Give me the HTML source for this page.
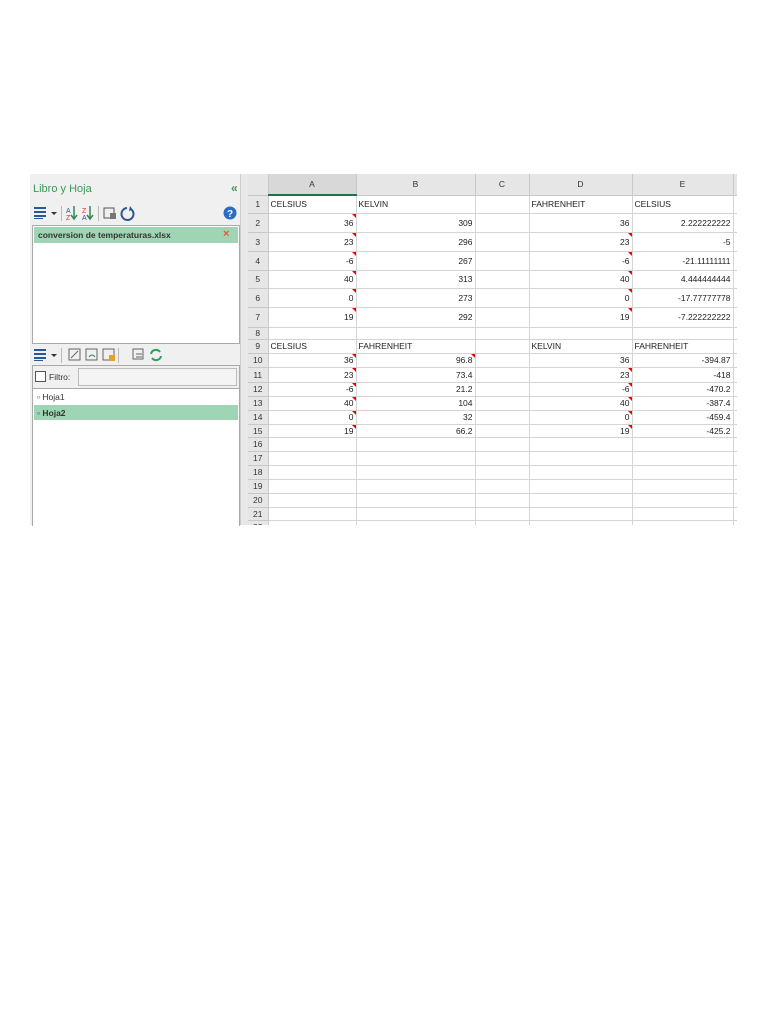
<!DOCTYPE html>
<html><head><meta charset="utf-8"><style>
body{margin:0;width:768px;height:1024px;background:#fff;position:relative;font-family:"Liberation Sans",sans-serif;overflow:hidden}
.a{position:absolute}
#panel{left:30px;top:174px;width:210px;height:351px;background:#f0f0f0}
table{border-collapse:collapse;table-layout:fixed;font-size:8.5px;color:#222;width:495px}
td{border-right:1px solid #d4d4d4;border-bottom:1px solid #d4d4d4;padding:0 2px;white-space:nowrap;overflow:hidden;position:relative}
td.h{background:#e6e6e6;text-align:center;color:#333;border-color:#c8c8c8}
td.r{text-align:right}
td.n{background:#e6e6e6;text-align:center;color:#333;border-color:#c8c8c8}
td.sel{border-bottom:2px solid #217346;background:#d8d8d8}
.t::after{content:"";position:absolute;right:0;top:0;border-top:4px solid #e00;border-left:4px solid transparent}
</style></head><body>
<div class="a" id="panel"></div>
<div class="a" style="left:33px;top:183px;font-size:11px;color:#3a9a5a">Libro y Hoja</div>
<div class="a" style="left:231px;top:181px;font-size:12px;color:#3a9a5a;font-weight:bold">«</div>
<svg class="a" style="left:32px;top:203px" width="210" height="20">
<g fill="#2b5797"><rect x="2" y="4" width="12" height="2"/><rect x="2" y="8" width="12" height="2"/><rect x="2" y="12" width="12" height="2"/><rect x="2" y="15" width="9" height="1"/></g>
<path d="M19 9 l3 3 l3-3z" fill="#333"/><rect x="29" y="3" width="1" height="15" fill="#bbb"/>
<text x="34" y="10" font-size="7" fill="#2b5797">A</text><text x="34" y="17" font-size="7" fill="#d33">Z</text><path d="M42 3v12M39 12l3 4 3-4" stroke="#2e8b57" fill="none" stroke-width="1.5"/>
<text x="50" y="10" font-size="7" fill="#d33">Z</text><text x="50" y="17" font-size="7" fill="#2b5797">A</text><path d="M58 3v12M55 12l3 4 3-4" stroke="#2e8b57" fill="none" stroke-width="1.5"/>
<rect x="66" y="3" width="1" height="15" fill="#bbb"/>
<rect x="72" y="5" width="10" height="10" fill="none" stroke="#555"/><rect x="78" y="10" width="6" height="6" fill="#777"/>
<path d="M95 5 a6 6 0 1 0 5 2" stroke="#2b5797" stroke-width="2" fill="none"/><path d="M98 3l3 4-4 1z" fill="#2b5797"/>
<circle cx="198" cy="10" r="6.5" fill="#2b6cc4"/><text x="195" y="14" font-size="10" font-weight="bold" fill="#fff">?</text>
</svg>
<div class="a" style="left:32px;top:225px;width:206px;height:117px;background:#fff;border:1px solid #aaa"></div>
<div class="a" style="left:34px;top:227px;width:204px;height:16px;background:#9fd5b5"></div>
<div class="a" style="left:38px;top:230px;font-size:8.5px;font-weight:bold;color:#333">conversion de temperaturas.xlsx</div>
<div class="a" style="left:223px;top:228px;font-size:11px;font-weight:bold;color:#e53">×</div>
<svg class="a" style="left:32px;top:345px" width="210" height="20">
<g fill="#2b5797"><rect x="2" y="4" width="12" height="2"/><rect x="2" y="8" width="12" height="2"/><rect x="2" y="12" width="12" height="2"/><rect x="2" y="15" width="9" height="1"/></g>
<path d="M19 9 l3 3 l3-3z" fill="#333"/><rect x="29" y="3" width="1" height="15" fill="#bbb"/>
<rect x="37" y="4" width="11" height="11" fill="none" stroke="#666"/><path d="M39 13l7-7" stroke="#666"/>
<rect x="54" y="4" width="11" height="11" fill="none" stroke="#666"/><path d="M57 12q3-4 6 0" stroke="#2e8b57" fill="none"/>
<rect x="71" y="4" width="11" height="11" fill="none" stroke="#666"/><rect x="77" y="10" width="6" height="6" fill="#e8a020"/>
<rect x="86" y="3" width="1" height="15" fill="#bbb"/>
<rect x="101" y="4" width="10" height="10" fill="none" stroke="#666"/><path d="M104 9h6M104 12h6" stroke="#666"/>
<path d="M119 9a5 5 0 0 1 9-2M129 11a5 5 0 0 1-9 2" stroke="#2ea05a" stroke-width="2" fill="none"/>
</svg>
<div class="a" style="left:32px;top:365px;width:206px;height:22px;background:#f0f0f0;border:1px solid #aaa"></div>
<div class="a" style="left:35px;top:371px;width:9px;height:9px;border:1px solid #555;background:#fff"></div>
<div class="a" style="left:49px;top:372px;font-size:8.5px;color:#333">Filtro:</div>
<div class="a" style="left:78px;top:368px;width:157px;height:16px;background:#f4f4f4;border:1px solid #bbb"></div>
<div class="a" style="left:32px;top:388px;width:206px;height:137px;background:#fff;border-left:1px solid #aaa;border-right:1px solid #aaa;border-top:1px solid #aaa"></div>
<div class="a" style="left:37px;top:392px;font-size:8.5px;color:#333">▫ Hoja1</div>
<div class="a" style="left:34px;top:405px;width:204px;height:15px;background:#9fd5b5"></div>
<div class="a" style="left:37px;top:408px;font-size:8.5px;color:#333;font-weight:bold">▫ Hoja2</div>
<div class="a" style="left:240px;top:174px;width:8px;height:351px;background:#e8e8e8;border-left:1px solid #ccc"></div>
<div class="a" style="left:248px;top:174px;width:489px;height:351px;overflow:hidden">
<table>
<colgroup><col style="width:20px"><col style="width:88px"><col style="width:119px"><col style="width:54px"><col style="width:103px"><col style="width:101px"><col style="width:10px"></colgroup>
<tr style="height:21px"><td class="h"></td><td class="h sel">A</td><td class="h">B</td><td class="h">C</td><td class="h">D</td><td class="h">E</td><td class="h"></td></tr>
<tr style="height:18px"><td class="n">1</td><td>CELSIUS</td><td>KELVIN</td><td></td><td>FAHRENHEIT</td><td>CELSIUS</td><td></td></tr>
<tr style="height:19px"><td class="n">2</td><td class="r t">36</td><td class="r">309</td><td></td><td class="r">36</td><td class="r">2.222222222</td><td></td></tr>
<tr style="height:19px"><td class="n">3</td><td class="r t">23</td><td class="r">296</td><td></td><td class="r t">23</td><td class="r">-5</td><td></td></tr>
<tr style="height:19px"><td class="n">4</td><td class="r t">-6</td><td class="r">267</td><td></td><td class="r t">-6</td><td class="r">-21.11111111</td><td></td></tr>
<tr style="height:18px"><td class="n">5</td><td class="r t">40</td><td class="r">313</td><td></td><td class="r t">40</td><td class="r">4.444444444</td><td></td></tr>
<tr style="height:19px"><td class="n">6</td><td class="r t">0</td><td class="r">273</td><td></td><td class="r t">0</td><td class="r">-17.77777778</td><td></td></tr>
<tr style="height:20px"><td class="n">7</td><td class="r t">19</td><td class="r">292</td><td></td><td class="r t">19</td><td class="r">-7.222222222</td><td></td></tr>
<tr style="height:12px"><td class="n">8</td><td></td><td></td><td></td><td></td><td></td><td></td></tr>
<tr style="height:14px"><td class="n">9</td><td>CELSIUS</td><td>FAHRENHEIT</td><td></td><td>KELVIN</td><td>FAHRENHEIT</td><td></td></tr>
<tr style="height:14px"><td class="n">10</td><td class="r t">36</td><td class="r t">96.8</td><td></td><td class="r">36</td><td class="r">-394.87</td><td></td></tr>
<tr style="height:15px"><td class="n">11</td><td class="r t">23</td><td class="r">73.4</td><td></td><td class="r t">23</td><td class="r">-418</td><td></td></tr>
<tr style="height:14px"><td class="n">12</td><td class="r t">-6</td><td class="r">21.2</td><td></td><td class="r t">-6</td><td class="r">-470.2</td><td></td></tr>
<tr style="height:14px"><td class="n">13</td><td class="r t">40</td><td class="r">104</td><td></td><td class="r t">40</td><td class="r">-387.4</td><td></td></tr>
<tr style="height:14px"><td class="n">14</td><td class="r t">0</td><td class="r">32</td><td></td><td class="r t">0</td><td class="r">-459.4</td><td></td></tr>
<tr style="height:13px"><td class="n">15</td><td class="r t">19</td><td class="r">66.2</td><td></td><td class="r t">19</td><td class="r">-425.2</td><td></td></tr>
<tr style="height:14px"><td class="n">16</td><td></td><td></td><td></td><td></td><td></td><td></td></tr>
<tr style="height:14px"><td class="n">17</td><td></td><td></td><td></td><td></td><td></td><td></td></tr>
<tr style="height:14px"><td class="n">18</td><td></td><td></td><td></td><td></td><td></td><td></td></tr>
<tr style="height:14px"><td class="n">19</td><td></td><td></td><td></td><td></td><td></td><td></td></tr>
<tr style="height:14px"><td class="n">20</td><td></td><td></td><td></td><td></td><td></td><td></td></tr>
<tr style="height:13px"><td class="n">21</td><td></td><td></td><td></td><td></td><td></td><td></td></tr>
<tr style="height:14px"><td class="n">22</td><td></td><td></td><td></td><td></td><td></td><td></td></tr>
</table></div>
</body></html>
